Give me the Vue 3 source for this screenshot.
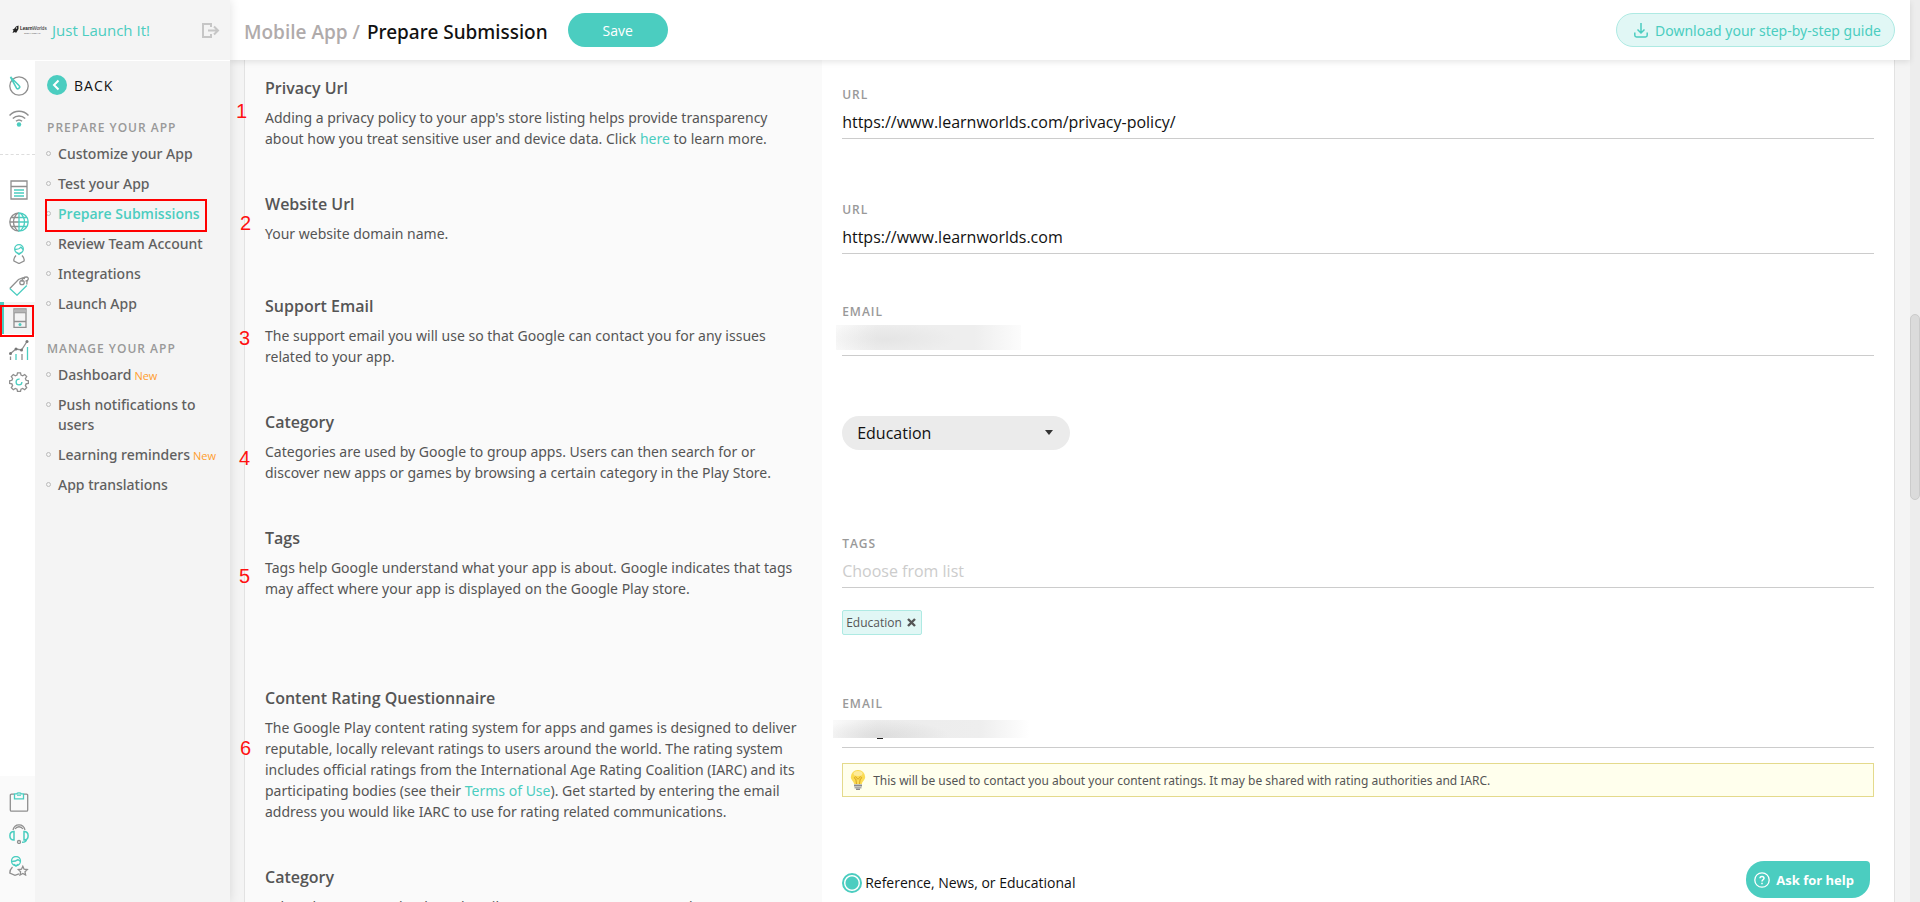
<script setup>
import { ref } from 'vue'

const rail = [
  { id: 'gauge', label: 'Getting started' },
  { id: 'wifi', label: 'Activity' },
  { id: 'page', label: 'Courses' },
  { id: 'globe', label: 'Website' },
  { id: 'user', label: 'Users' },
  { id: 'tag', label: 'Marketing' },
  { id: 'phone', label: 'Mobile app' },
  { id: 'chart', label: 'Reports' },
  { id: 'gear', label: 'Settings' },
]

const menus = [
  {
    title: 'Prepare your app',
    items: [
      { text: 'Customize your App' },
      { text: 'Test your App' },
      { text: 'Prepare Submissions', active: true },
      { text: 'Review Team Account' },
      { text: 'Integrations' },
      { text: 'Launch App' },
    ],
  },
  {
    title: 'Manage your app',
    items: [
      { text: 'Dashboard', isNew: true },
      { text: 'Push notifications to users' },
      { text: 'Learning reminders', isNew: true },
      { text: 'App translations' },
    ],
  },
]

// Numbered markers float over the left edge of the card, relative to their row.
const marks = [
  { x: -9, y: 40 },
  { x: -5, y: 20 },
  { x: -6, y: 33 },
  { x: -6, y: 37 },
  { x: -6, y: 39 },
  { x: -5, y: 51 },
]
const markStyle = (n) => ({ left: marks[n - 1].x + 'px', top: marks[n - 1].y + 'px' })

const privacyUrl = ref('https://www.learnworlds.com/privacy-policy/')
const websiteUrl = ref('https://www.learnworlds.com')
const rating = ref('reference')
</script>

<template>
  <div class="app">
    <aside class="side">
      <div class="brand">
        <svg class="logo" width="36" height="10" viewBox="0 0 36 10" role="img" aria-label="LearnWorlds">
          <path d="M6.500 .5 4 1.500 2 4 .5 4.500 1.500 5.500 .5 8 3 7 4 8 5 6.500 6.500 4Z" fill="#222" />
          <circle cx="4.500" cy="3" r=".7" fill="#f4f4f4" />
          <text x="8" y="5" font-size="4.600" fill="#222"><tspan font-weight="700">Learn</tspan>Worlds</text>
          <text x="12" y="9" font-size="2" fill="#444">JUST LAUNCH IT!</text>
        </svg>
        <a class="brand-name" href="#">Just Launch It!</a>
        <button class="plain exit" aria-label="Log out">
          <svg width="18" height="15" viewBox="0 0 18 15" fill="none" stroke="#c6c6c6" stroke-width="2">
            <path d="M9 4V1H1v13h8v-3M6 7.500h10M12 3.500l4 4-4 4" />
          </svg>
        </button>
      </div>

      <div class="side-body">
        <nav class="rail" aria-label="Sections">
          <a v-for="r in rail" :key="r.id" href="#" class="rail-link" :class="r.id" :aria-label="r.label">
            <svg width="20" height="20" viewBox="0 0 20 20" fill="none" stroke="#8f8f8f" stroke-width="1.300">
              <template v-if="r.id === 'gauge'">
                <circle cx="10" cy="10" r="9.200" />
                <path d="M1.500 1 10 9.500a1.600 1.600 0 0 1-2.400 2.800Z" class="teal" stroke-width="1.600" />
              </template>
              <template v-else-if="r.id === 'wifi'">
                <path d="M.5 7.500a13 13 0 0 1 19 0M3.800 10.500a9 9 0 0 1 12.400 0M7 13.300a4.500 4.500 0 0 1 6 0" stroke-width="1.500" />
                <circle cx="10" cy="16.500" r="2.200" fill="#4bcdc0" stroke="none" />
              </template>
              <template v-else-if="r.id === 'page'">
                <path d="M2 1h16v18H2ZM2 6.500h16" />
                <path d="M5 10h10M5 13h10M5 16h10" class="teal" />
              </template>
              <template v-else-if="r.id === 'globe'">
                <path d="M10 .8a9.200 9.200 0 0 0 0 18.400M9 1C3 6 3 14 9 19M1 10h9M2.500 5.500H10M2.500 14.500H10" />
                <path d="M10 .8a9.200 9.200 0 0 1 0 18.400ZM11 1c6 5 6 13 0 18M10 10h9M10 5.500h7.500M10 14.500h7.500" class="teal" />
              </template>
              <template v-else-if="r.id === 'user'">
                <circle cx="10" cy="5" r="4.300" class="teal" />
                <path d="M6 5.500c3 0 5-1 6-2.500l2 2.500M7 8l3 2.500L13 8" class="teal" />
                <path d="M7 11.500c-2 2-2.500 4-2 5.500l5 2.500 5-2.500c.5-1.500 0-3.500-2-5.500" />
              </template>
              <template v-else-if="r.id === 'tag'">
                <path d="M.8 12.500 9.500 3.500l4-1.500 2.500.5M17.800 8.500 18 5" />
                <circle cx="13" cy="6.500" r="2.200" />
                <path d="M13 6c0-4 2-5 4.500-5S20 5 16.500 5" />
                <path d="M.8 12.500 8 19.200l9.800-9.700" class="teal" />
              </template>
              <template v-else-if="r.id === 'phone'">
                <path d="M4 1h12v18.500H4Z" />
                <path d="M4 4.500h12M4 13.500h12" />
                <path d="M4 1.500h12v3H4Z" fill="#b5b5b5" stroke="none" />
                <circle cx="10" cy="16.500" r="1.500" fill="#4bcdc0" stroke="none" />
              </template>
              <template v-else-if="r.id === 'chart'">
                <path d="M1.500 13.500 7 9l5.500 1L18 1.500M1.500 16.500V20M13 14v6" />
                <path d="M7 14v6M18.500 7v13" class="teal" />
                <g fill="#777" stroke="none">
                  <circle cx="1.500" cy="13.500" r="1.500" /><circle cx="7" cy="9" r="1.500" />
                  <circle cx="12.500" cy="10" r="1.500" /><circle cx="18" cy="1.500" r="1.500" />
                </g>
              </template>
              <template v-else>
                <path d="M8.500.8h3l.5 2.300 1.700.7 2-1.300 2 2-1.300 2 .7 1.800 2.300.5v2.600l-2.300.5-.7 1.800 1.300 2-2 2-2-1.300-1.700.7-.5 2.300h-3L8 17.100l-1.700-.7-2 1.300-2-2 1.300-2-.7-1.800L.6 11.400V8.800l2.300-.5.7-1.800-1.300-2 2-2 2 1.300L8 3.100Z" />
                <circle cx="10" cy="10" r="2.900" class="teal" stroke-dasharray="14 4" />
              </template>
            </svg>
          </a>
          <div class="rail-bottom">
            <a href="#" class="rail-link" aria-label="Tasks">
              <svg width="20" height="20" viewBox="0 0 20 20" fill="none" stroke="#8f8f8f" stroke-width="1.300">
                <path d="M5 2.200H2.500a1.200 1.200 0 0 0-1.200 1.200v14.500a1.200 1.200 0 0 0 1.200 1.200h15a1.200 1.200 0 0 0 1.200-1.200V3.400a1.200 1.200 0 0 0-1.200-1.200H15" />
                <path d="M5.500 1.800h2.200c.5-1.200 4.100-1.200 4.600 0h2.200v5h-9ZM8 3.200h4" class="teal" />
              </svg>
            </a>
            <a href="#" class="rail-link" aria-label="Support">
              <svg width="20" height="20" viewBox="0 0 20 20" fill="none" stroke="#8f8f8f" stroke-width="1.300">
                <path d="M4 6C5.500-.8 14.500-.8 16 6M6 5c2-3 6-3 8 0" />
                <circle cx="10" cy="18" r="1.500" />
                <path d="M5 7.500v8.500c-5.500 0-5.500-8.500 0-8.500ZM15 7.500v8.500c5.500 0 5.500-8.500 0-8.500ZM17.500 15c0 2.500-1.500 3.300-4.500 3.300" class="teal" stroke-width="1.500" />
              </svg>
            </a>
            <a href="#" class="rail-link" aria-label="Community">
              <svg width="20" height="20" viewBox="0 0 20 20" fill="none" stroke="#8f8f8f" stroke-width="1.300">
                <circle cx="7" cy="5" r="4.500" class="teal" />
                <path d="M3 5.500c3 0 5-1 6-2l2.500 2M4.500 8l2.500 2.200L9.500 8" class="teal" />
                <path d="M3.500 11C1.500 13 .8 15 .8 17l5.200 2.300 4-1.500" />
                <path d="m13.800 10.300 1.300 2.900 3.200.4-2.300 2.200.6 3.200-2.800-1.600L11 19l.6-3.200-2.300-2.200 3.200-.4Z" />
              </svg>
            </a>
          </div>
        </nav>

        <div class="menu">
          <button class="plain back">
            <svg width="20" height="20" viewBox="0 0 20 20" aria-hidden="true">
              <circle cx="10" cy="10" r="10" fill="#4bcdc0" />
              <path d="m11.500 5.500-4.500 4.500 4.500 4.500" fill="none" stroke="#fff" stroke-width="2" />
            </svg>
            BACK
          </button>
          <nav v-for="m in menus" :key="m.title" class="menu-group" :aria-label="m.title">
            <h2>{{ m.title }}</h2>
            <ul>
              <li v-for="i in m.items" :key="i.text" :class="{ active: i.active }">
                <a href="#">{{ i.text }}<span v-if="i.isNew" class="new">New</span></a>
              </li>
            </ul>
          </nav>
        </div>
      </div>
    </aside>

    <div class="content">
      <header class="top">
        <h1><span>Mobile App /</span> Prepare Submission</h1>
        <button class="save">Save</button>
        <a class="guide" href="#">
          <svg width="14" height="15" viewBox="0 0 14 15" fill="none" stroke="#4bcdc0" stroke-width="1.500" aria-hidden="true">
            <path d="M7 0v9.500M3.500 6.500 7 10l3.500-3.500M.8 9.500v2.800q0 1.700 1.700 1.700h9q1.700 0 1.700-1.700V9.500" />
          </svg>
          Download your step-by-step guide
        </a>
      </header>

      <main class="scroll">
        <div class="card">
          <section class="row">
            <div class="info">
              <span class="mark" :style="markStyle(1)">1</span>
              <h3>Privacy Url</h3>
              <p>Adding a privacy policy to your app's store listing helps provide transparency about how you treat sensitive user and device data. Click <a href="#">here</a> to learn more.</p>
            </div>
            <div class="field">
              <label for="privacy">URL</label>
              <input id="privacy" v-model="privacyUrl" type="text" class="line" />
            </div>
          </section>

          <section class="row">
            <div class="info">
              <span class="mark" :style="markStyle(2)">2</span>
              <h3>Website Url</h3>
              <p>Your website domain name.</p>
            </div>
            <div class="field">
              <label for="website">URL</label>
              <input id="website" v-model="websiteUrl" type="text" class="line" />
            </div>
          </section>

          <section class="row">
            <div class="info">
              <span class="mark" :style="markStyle(3)">3</span>
              <h3>Support Email</h3>
              <p>The support email you will use so that Google can contact you for any issues related to your app.</p>
            </div>
            <div class="field">
              <label for="support">Email</label>
              <div class="masked">
                <input id="support" type="email" class="line" />
                <span class="smudge"></span>
              </div>
            </div>
          </section>

          <section class="row">
            <div class="info">
              <span class="mark" :style="markStyle(4)">4</span>
              <h3>Category</h3>
              <p>Categories are used by Google to group apps. Users can then search for or discover new apps or games by browsing a certain category in the Play Store.</p>
            </div>
            <div class="field">
              <div class="select">
                <select aria-label="Category">
                  <option>Education</option>
                </select>
                <svg width="8" height="5" viewBox="0 0 8 5" aria-hidden="true"><path d="M0 0h8L4 5Z" fill="#333" /></svg>
              </div>
            </div>
          </section>

          <section class="row">
            <div class="info">
              <span class="mark" :style="markStyle(5)">5</span>
              <h3>Tags</h3>
              <p>Tags help Google understand what your app is about. Google indicates that tags may affect where your app is displayed on the Google Play store.</p>
            </div>
            <div class="field">
              <label for="tags">Tags</label>
              <input id="tags" type="text" class="line" placeholder="Choose from list" />
              <div class="chips">
                <span class="chip">Education
                  <button class="plain" aria-label="Remove Education">
                    <svg width="9" height="9" viewBox="0 0 9 9" fill="none" stroke="#555" stroke-width="2.400"><path d="m1 1 7 7M8 1 1 8" /></svg>
                  </button>
                </span>
              </div>
            </div>
          </section>

          <section class="row">
            <div class="info">
              <span class="mark" :style="markStyle(6)">6</span>
              <h3>Content Rating Questionnaire</h3>
              <p>The Google Play content rating system for apps and games is designed to deliver reputable, locally relevant ratings to users around the world. The rating system includes official ratings from the International Age Rating Coalition (IARC) and its participating bodies (see their <a href="#">Terms of Use</a>). Get started by entering the email address you would like IARC to use for rating related communications.</p>
            </div>
            <div class="field">
              <label for="iarc">Email</label>
              <div class="masked low">
                <input id="iarc" type="email" class="line" />
                <span class="smudge"></span>
              </div>
              <div class="note">
                <svg width="16" height="20" viewBox="0 0 16 20" aria-hidden="true">
                  <path d="M8 0a7 7 0 0 0-7.200 7C.8 10 4 11.500 4 14h8c0-2.500 3.200-4 3.200-7A7 7 0 0 0 8 0Z" fill="#fbdc55" />
                  <ellipse cx="8" cy="3.500" rx="4.500" ry="2.500" fill="#fdeb9b" />
                  <path d="M6.500 14 5.800 9C4 9 4 6.800 5.500 6.800S6.500 9 8 9s1-2.200 2.500-2.200S12 9 10.200 9l-.7 5" fill="none" stroke="#d9a520" />
                  <path d="M4 14.500h8v2H4Z" fill="#8a8a8a" /><path d="M4.500 17h7v1.500h-7Z" fill="#aaa" /><path d="M6 18.500h4V20H6Z" fill="#888" />
                </svg>
                This will be used to contact you about your content ratings. It may be shared with rating authorities and IARC.
              </div>
            </div>
          </section>

          <section class="row">
            <div class="info">
              <h3>Category</h3>
              <p>Select the category that best describes your app. We recommend</p>
            </div>
            <div class="field">
              <label class="radio">
                <input v-model="rating" type="radio" name="rating" value="reference" />
                Reference, News, or Educational
              </label>
            </div>
          </section>
        </div>
      </main>
    </div>

    <div class="track" aria-hidden="true"><div class="thumb"></div></div>

    <div class="outline outline-menu"></div>
    <div class="outline outline-rail"></div>

    <button class="help">
      <svg width="16" height="16" viewBox="0 0 16 16" fill="none" stroke="#fff" stroke-width="1.300" aria-hidden="true">
        <circle cx="8" cy="8" r="7.200" />
        <path d="M6 6.300c0-2.600 4-2.500 4 0 0 1.500-2 1.500-2 3.200M8 10.700v1.500" stroke-width="1.500" />
      </svg>
      Ask for help
    </button>
  </div>
</template>

<style>
body {
  margin: 0;
}
</style>

<style scoped>
.app {
  position: relative;
  display: flex;
  height: 100vh;
  overflow: hidden;
  background: #f4f4f4;
  color: #555;
  font-family: "Open Sans", "Noto Sans", sans-serif;
  font-size: 14px;
}
.app * {
  box-sizing: border-box;
}
a {
  color: #4bcdc0;
  text-decoration: none;
}
button,
input,
select {
  font: inherit;
}
button {
  cursor: pointer;
}
.plain {
  display: inline-flex;
  padding: 0;
  border: 0;
  background: none;
}
.teal {
  stroke: #4bcdc0;
}

.side {
  position: relative;
  z-index: 3;
  display: flex;
  flex-direction: column;
  flex: none;
  width: 230px;
  background: #f4f4f4;
  box-shadow: 0 0 10px rgba(0, 0, 0, 0.12);
}
.brand {
  display: flex;
  align-items: center;
  height: 61px;
  padding: 0 10px 0 12px;
  border-bottom: 1px solid #fff;
}
.logo {
  font-family: "Liberation Sans", sans-serif;
}
.brand-name {
  margin-left: 4px;
  font-size: 15px;
}
.exit {
  margin-left: auto;
}
.side-body {
  display: flex;
  flex: 1;
}
.rail {
  display: flex;
  flex-direction: column;
  width: 35px;
  padding-top: 9px;
  background: #fff;
}
.rail-link {
  display: flex;
  align-items: center;
  justify-content: center;
  height: 32px;
  padding-left: 3px;
}
.rail-link.wifi {
  height: 53px;
  padding-bottom: 21px;
  border-bottom: 1px dashed #ddd;
  margin-bottom: 19px;
}
.rail-link.phone {
  border-left: 4px solid #4bcdc0;
  padding-left: 0;
  background: #f4f4f4;
}
.rail-bottom {
  display: flex;
  flex-direction: column;
  margin-top: auto;
  padding: 10px 0 20px;
  background: #fafafa;
}
.menu {
  flex: 1;
  padding-top: 12px;
}
.back {
  align-items: center;
  gap: 7px;
  height: 24px;
  margin: 0 0 6px 12px;
  color: #111;
  font-size: 14px;
  letter-spacing: 1px;
}
.menu-group {
  padding-top: 15px;
}
.menu-group h2 {
  margin: 0 0 6px 12px;
  color: #999;
  font-size: 12px;
  font-weight: 600;
  line-height: 20px;
  letter-spacing: 1px;
  text-transform: uppercase;
}
.menu-group ul {
  margin: 0;
  padding: 0;
  list-style: none;
}
.menu-group li {
  position: relative;
  padding: 0 8px 10px 23px;
  font-family: "Noto Sans", sans-serif;
  line-height: 20px;
}
.menu-group li::before {
  content: "";
  position: absolute;
  left: 11px;
  top: 7px;
  width: 3px;
  height: 3px;
  border: 1px solid #bbb;
  border-radius: 50%;
}
.menu-group li a {
  color: #606060;
  font-size: 14px;
  font-weight: 500;
}
.menu-group li.active a {
  color: #4bcdc0;
  font-family: "Open Sans", sans-serif;
  font-weight: 600;
}
.new {
  margin-left: 3px;
  color: #ff9d2e;
  font-family: "Open Sans", sans-serif;
  font-size: 11px;
  font-weight: 400;
  line-height: 11px;
}

.content {
  display: flex;
  flex-direction: column;
  flex: 1;
  min-width: 0;
}
.top {
  position: relative;
  z-index: 2;
  display: flex;
  align-items: center;
  flex: none;
  height: 60px;
  padding: 0 15px 0 14px;
  background: #fff;
  box-shadow: 0 2px 6px rgba(0, 0, 0, 0.1);
}
.top h1 {
  margin: 0;
  padding-top: 4px;
  color: #111;
  font-family: "Noto Sans", sans-serif;
  font-size: 19px;
  font-weight: 500;
  line-height: 28px;
}
.top h1 span {
  margin-right: 2px;
  color: #b0abab;
  font-family: "Open Sans", sans-serif;
  font-weight: 600;
}
.save {
  width: 100px;
  height: 34px;
  margin-left: 20px;
  border: 0;
  border-radius: 17px;
  background: #4bcdc0;
  color: #fff;
  font-size: 14px;
}
.guide {
  display: flex;
  align-items: center;
  gap: 7px;
  height: 34px;
  margin-left: auto;
  padding: 0 13px 0 17px;
  border: 1px solid #aeeae3;
  border-radius: 17px;
  background: #e1f7f5;
  font-family: "Noto Sans", sans-serif;
  font-size: 14px;
}

.scroll {
  display: flex;
  flex: 1;
  min-height: 0;
  overflow: hidden;
  padding: 0 15px 0 14px;
}
.card {
  flex: 1;
  height: max-content;
  border: solid #e2e2e2;
  border-width: 0 1px;
  background: #fff;
}
.row {
  display: grid;
  grid-template-columns: 35% 65%;
}
.info {
  position: relative;
  padding: 0 16px 43px 20px;
  background: #fafafa;
}
.field {
  padding: 9px 20px 40px;
}
.row:first-child .info {
  padding-top: 16px;
}
.row:first-child .field {
  padding-top: 26px;
}
.info h3 {
  margin: 0 0 7px;
  color: #555;
  font-size: 16px;
  font-weight: 600;
  line-height: 24px;
}
.info p {
  margin: 0;
  font-family: "Noto Sans", sans-serif;
  line-height: 21px;
}
.mark {
  position: absolute;
  color: #f11;
  font-family: "Liberation Sans", Arial, sans-serif;
  font-size: 20px;
  line-height: 23px;
}
.field label {
  display: block;
  color: #999;
  font-size: 12px;
  font-weight: 600;
  line-height: 18px;
  letter-spacing: 1px;
  text-transform: uppercase;
}
.line {
  display: block;
  width: 100%;
  height: 35px;
  padding: 2px 0 0;
  border: 0;
  border-bottom: 1px solid #ccc;
  outline: 0;
  background: transparent;
  color: #111;
  font-size: 16px;
}
.line::placeholder {
  color: #ccc;
}
.masked {
  position: relative;
}
.smudge {
  position: absolute;
  left: -6px;
  top: 4px;
  width: 185px;
  height: 25px;
  background:
    radial-gradient(ellipse 70px 16px at 50px 14px, rgba(215, 215, 215, 0.4), transparent),
    linear-gradient(90deg, #f9f9f9, #eeeeee 22%, #eeeeee 75%, #fcfcfc);
}
.low .smudge {
  left: -9px;
  top: 7px;
  width: 197px;
  height: 18px;
  background:
    radial-gradient(ellipse 70px 16px at 46px 16px, rgba(205, 205, 205, 0.5), transparent),
    linear-gradient(90deg, #fafafa, #ececec 22%, #eeeeee 75%, #ffffff);
}
.low::after {
  content: "";
  position: absolute;
  left: 35px;
  top: 25px;
  width: 6px;
  height: 1px;
  background: #222;
}
.select {
  position: relative;
  width: 228px;
  margin-top: -3px;
}
.select select {
  width: 100%;
  height: 34px;
  padding: 0 15px;
  border: 0;
  border-radius: 17px;
  appearance: none;
  background: #ebebeb;
  color: #111;
  font-size: 16px;
}
.select svg {
  position: absolute;
  right: 17px;
  top: 14px;
}
.chips {
  display: flex;
  padding: 22px 0 11px;
}
.chip {
  display: flex;
  align-items: center;
  gap: 5px;
  height: 25px;
  padding: 0 5px 0 3px;
  border: 1px solid #aeeae3;
  border-radius: 2px;
  background: #e1f7f5;
  font-size: 12px;
}
.note {
  display: flex;
  align-items: center;
  gap: 7px;
  min-height: 34px;
  margin-top: 15px;
  padding: 0 7px;
  border: 1px solid #e4da8c;
  background: #ffffed;
  font-family: "Noto Sans", sans-serif;
  font-size: 12px;
}
.field .radio {
  display: flex;
  align-items: center;
  gap: 3px;
  margin-top: -1px;
  color: #111;
  font-size: 14px;
  font-weight: 400;
  letter-spacing: 0;
  text-transform: none;
}
.radio input {
  width: 20px;
  height: 20px;
  margin: 0;
  border: 2px solid #4bcdc0;
  border-radius: 50%;
  appearance: none;
  background: radial-gradient(circle, #4bcdc0 6px, #fff 7px);
}

.track {
  position: relative;
  flex: none;
  width: 10px;
  background: #ededed;
}
.thumb {
  position: absolute;
  top: 314px;
  width: 10px;
  height: 186px;
  border: 1px solid #cbcbcb;
  border-radius: 5px;
  background: #dbdbdb;
}
.outline {
  position: absolute;
  z-index: 4;
  border: 2px solid #f00;
  pointer-events: none;
}
.outline-menu {
  left: 45px;
  top: 199px;
  width: 162px;
  height: 33px;
}
.outline-rail {
  left: 0;
  top: 305px;
  width: 34px;
  height: 32px;
}
.help {
  position: absolute;
  right: 50px;
  bottom: 4px;
  display: flex;
  align-items: center;
  gap: 6px;
  height: 37px;
  padding: 0 16px 0 8px;
  border: 0;
  border-radius: 18px 4px 18px 18px;
  background: #4bcdc0;
  color: #fff;
  font-size: 13px;
  font-weight: 700;
}
</style>
